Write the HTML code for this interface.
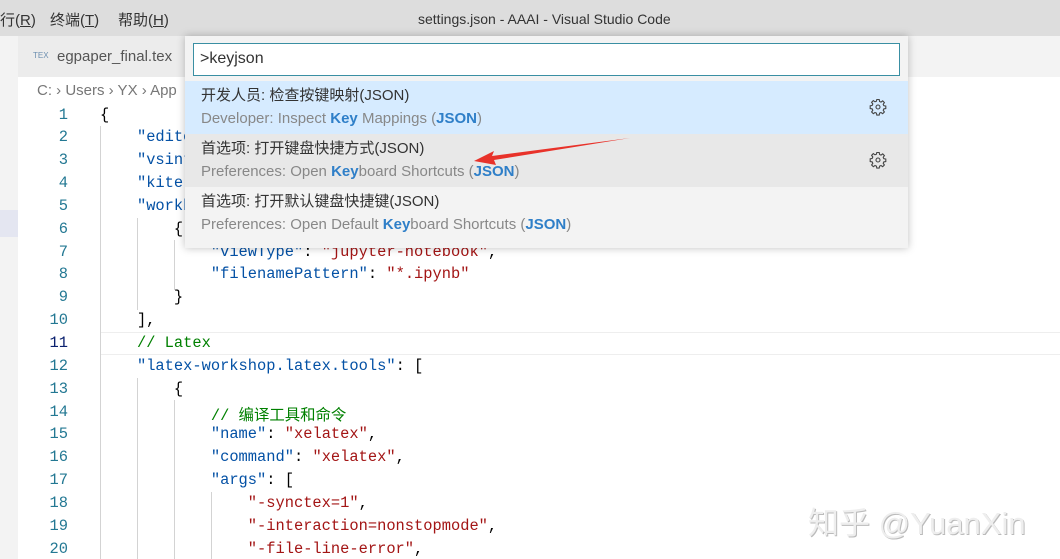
<!DOCTYPE html>
<html><head><meta charset="utf-8"><style>
*{margin:0;padding:0;box-sizing:border-box}
body{width:1060px;height:559px;overflow:hidden;background:#fff;position:relative;font-family:"Liberation Sans","Noto Sans CJK SC",sans-serif}
.title{position:absolute;left:0;top:0;width:1060px;height:36px;background:#dddddd;font-size:15px;color:#333}
.title span{position:absolute;top:9px}
.tabbar{position:absolute;left:0;top:36px;width:1060px;height:41px;background:#f3f3f3}
.act{position:absolute;left:0;top:36px;width:18px;height:523px;background:#f3f3f3}
.tab{position:absolute;left:18px;top:36px;width:168px;height:41px;background:#ececec;font-size:15px;color:#555}
.crumb{position:absolute;left:37px;top:82px;font-size:15px;color:#777}
.ln{position:absolute;left:30px;width:38px;text-align:right;font:15.4px "Liberation Mono",monospace;color:#237893}
.code{position:absolute;left:100px;font:15.4px "Liberation Mono","Noto Sans CJK SC",monospace;color:#000;white-space:pre}
.k{color:#0451a5}.s{color:#a31515}.c{color:#008000}
.guide{position:absolute;width:1px;background:#d3d3d3}
.qp{position:absolute;left:185px;top:36px;width:723px;height:212px;background:#f3f3f3;box-shadow:0 0 8px rgba(0,0,0,.25)}
.inp{position:absolute;left:8px;top:7px;width:707px;height:33px;background:#fff;border:1px solid #3a8fa3;font-size:16px;color:#333;padding:6px 6px}
.it{position:absolute;left:0;width:723px;height:53px}
.it .a{position:absolute;left:16px;top:3px;font-size:15px;color:#333}
.it .b{position:absolute;left:16px;top:29px;font-size:15px;color:#888}
.it b{color:#2f7fc8}
.gear{position:absolute;left:684px;top:17px}
</style></head><body>
<div class="title"><span style="left:0">行(<u>R</u>)</span><span style="left:50px">终端(<u>T</u>)</span><span style="left:118px">帮助(<u>H</u>)</span><span style="left:418px;font-size:14px;top:11px">settings.json - AAAI - Visual Studio Code</span></div>
<div class="tabbar"></div>
<div class="act"><div style="position:absolute;top:174px;width:18px;height:27px;background:#e4e6f1"></div></div>
<div class="tab"><span style="position:absolute;left:15px;top:15px;font-size:8px;color:#6d8fb0">TEX</span><span style="position:absolute;left:39px;top:12px">egpaper_final.tex</span></div>
<div class="crumb">C: › Users › YX › App</div>
<div style="position:absolute;left:100px;top:332px;width:960px;height:23px;border-top:1px solid #eee;border-bottom:1px solid #eee"></div>
<div class="guide" style="left:100px;top:126px;height:433px"></div>
<div class="guide" style="left:137px;top:218px;height:92px"></div>
<div class="guide" style="left:137px;top:378px;height:181px"></div>
<div class="guide" style="left:174px;top:240px;height:50px"></div>
<div class="guide" style="left:174px;top:400px;height:159px"></div>
<div class="guide" style="left:211px;top:492px;height:67px"></div>
<div id="lines"></div>
<script>
var L=['{','    <span class=k>"edito</span>','    <span class=k>"vsint</span>','    <span class=k>"kite</span>','    <span class=k>"workb</span>','        {','            <span class=k>"viewType"</span>: <span class=s>"jupyter-notebook"</span>,','            <span class=k>"filenamePattern"</span>: <span class=s>"*.ipynb"</span>','        }','    ],','    <span class=c>// Latex</span>','    <span class=k>"latex-workshop.latex.tools"</span>: [','        {','            <span class=c>// 编译工具和命令</span>','            <span class=k>"name"</span>: <span class=s>"xelatex"</span>,','            <span class=k>"command"</span>: <span class=s>"xelatex"</span>,','            <span class=k>"args"</span>: [','                <span class=s>"-synctex=1"</span>,','                <span class=s>"-interaction=nonstopmode"</span>,','                <span class=s>"-file-line-error"</span>,'];
var h='';for(var i=0;i<L.length;i++){var y=105.5+i*22.85;h+='<div class="ln" style="top:'+y+'px;'+(i==10?'color:#0b216f':'')+'">'+(i+1)+'</div><div class="code" style="top:'+y+'px">'+L[i]+'</div>';}
document.getElementById('lines').innerHTML=h;
</script>
<div style="position:absolute;left:808px;top:498px;font-size:31px;color:#eeeeee;text-shadow:1px 1px 0 #bbb">知乎 @YuanXin</div>
<div class="qp">
<div class="inp">&gt;keyjson</div>
<div class="it" style="top:45px;background:#d6ebff"><div class="a">开发人员: 检查按键映射(JSON)</div><div class="b">Developer: Inspect <b>Key</b> Mappings (<b>JSON</b>)</div>
<svg class="gear" width="18" height="18" viewBox="0 0 18 18"><g fill="none" stroke="#444" stroke-width="1.1"><circle cx="9" cy="9" r="2"/><path d="M7.8 1.5h2.4l.4 2 1.4.6 1.7-1.2 1.7 1.7-1.2 1.7.6 1.4 2 .4v2.4l-2 .4-.6 1.4 1.2 1.7-1.7 1.7-1.7-1.2-1.4.6-.4 2H7.8l-.4-2-1.4-.6-1.7 1.2-1.7-1.7 1.2-1.7-.6-1.4-2-.4V7.8l2-.4.6-1.4-1.2-1.7 1.7-1.7 1.7 1.2 1.4-.6z"/></g></svg></div>
<div class="it" style="top:98px;background:#e8e8e8"><div class="a">首选项: 打开键盘快捷方式(JSON)</div><div class="b">Preferences: Open <b>Key</b>board Shortcuts (<b>JSON</b>)</div>
<svg class="gear" width="18" height="18" viewBox="0 0 18 18"><g fill="none" stroke="#444" stroke-width="1.1"><circle cx="9" cy="9" r="2"/><path d="M7.8 1.5h2.4l.4 2 1.4.6 1.7-1.2 1.7 1.7-1.2 1.7.6 1.4 2 .4v2.4l-2 .4-.6 1.4 1.2 1.7-1.7 1.7-1.7-1.2-1.4.6-.4 2H7.8l-.4-2-1.4-.6-1.7 1.2-1.7-1.7 1.2-1.7-.6-1.4-2-.4V7.8l2-.4.6-1.4-1.2-1.7 1.7-1.7 1.7 1.2 1.4-.6z"/></g></svg></div>
<div class="it" style="top:151px"><div class="a">首选项: 打开默认键盘快捷键(JSON)</div><div class="b">Preferences: Open Default <b>Key</b>board Shortcuts (<b>JSON</b>)</div></div>
</div>
<svg style="position:absolute;left:0;top:0" width="1060" height="559"><path d="M630 138 L492 156 L494 151 L474 161 L496 165 L494 160 Z" fill="#e8322a"/></svg>
</body></html>
